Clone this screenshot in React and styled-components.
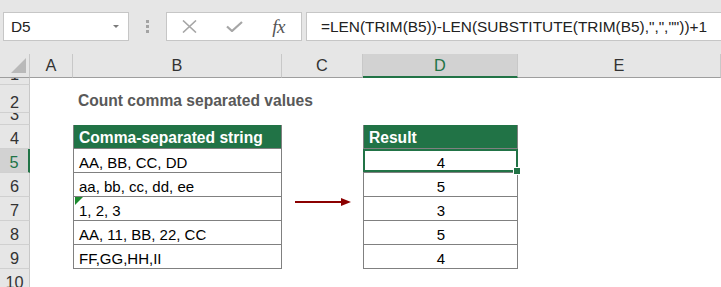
import React from 'react';
import styled, { createGlobalStyle } from 'styled-components';

// --- EXCEL-LIKE SHEET ---

const GlobalStyle = createGlobalStyle`
  html, body {
    margin: 0;
    padding: 0;
    background: #ffffff;
    overflow: hidden;
  }
`;

const GREEN = '#217346';
const CHROME = '#e6e6e6';

const Page = styled.div`
  width: 721px;
  height: 287px;
  overflow: hidden;
  font-family: 'Liberation Sans', Arial, sans-serif;
  color: #000;
`;

const TopBar = styled.div`
  height: 54px;
  box-sizing: border-box;
  background: ${CHROME};
  display: flex;
  align-items: flex-start;
  padding: 12px 0 0 3px;
`;

const NameBox = styled.div`
  width: 126px;
  height: 29px;
  box-sizing: border-box;
  background: #fff;
  border: 1px solid #c6c6c6;
  display: flex;
  align-items: center;
  justify-content: space-between;
  padding: 0 9px 0 7px;
  font-size: 15.4px;
  color: #222;
`;

const Caret = styled.span`
  width: 0;
  height: 0;
  border-left: 3.5px solid transparent;
  border-right: 3.5px solid transparent;
  border-top: 3.5px solid #7a7a7a;
`;

const Grip = styled.div`
  margin: 8px 0 0 17px;
  display: flex;
  flex-direction: column;
  gap: 2px;
`;

const GripDot = styled.span`
  width: 3px;
  height: 3px;
  background: #a3a3a3;
`;

const ButtonBox = styled.div`
  width: 136px;
  height: 29px;
  box-sizing: border-box;
  margin-left: 17px;
  background: #fff;
  border: 1px solid #c6c6c6;
  display: flex;
  align-items: center;
`;

const IconSlot = styled.div`
  width: 45px;
  display: flex;
  justify-content: center;
  align-items: center;
`;

const Fx = styled.span`
  font-family: 'Liberation Serif', 'Times New Roman', serif;
  font-style: italic;
  font-size: 19px;
  color: #555;
  letter-spacing: -0.5px;
`;

const FormulaBox = styled.div`
  flex: 1;
  height: 29px;
  box-sizing: border-box;
  margin-left: 4px;
  margin-right: -3px;
  background: #fff;
  border: 1px solid #c6c6c6;
  display: flex;
  align-items: center;
  padding-left: 14px;
  font-size: 15.4px;
  color: #222;
  white-space: nowrap;
`;

const Sheet = styled.div`
  display: grid;
  grid-template-columns: 30px 43px 209px 81px 155px 1fr;
  grid-template-rows: 24px 7px 28px 12px repeat(7, 24px);
  background: #fff;
`;

const Corner = styled.div`
  background: ${CHROME};
  border-right: 1px solid #c8c8c8;
  border-bottom: 1px solid #9e9e9e;
  display: flex;
  align-items: flex-end;
  justify-content: flex-end;
  padding: 0 3px 4px 0;
`;

const ColHead = styled.div`
  background: ${p => (p.$selected ? '#d2d2d2' : CHROME)};
  border-right: 1px solid #c8c8c8;
  border-bottom: ${p => (p.$selected ? `2px solid ${GREEN}` : '1px solid #9e9e9e')};
  display: flex;
  align-items: flex-end;
  justify-content: center;
  padding-bottom: ${p => (p.$selected ? 1 : 2)}px;
  font-size: 16.3px;
  color: ${p => (p.$selected ? GREEN : '#333')};
`;

const RowHead = styled.div`
  background: ${p => (p.$selected ? '#d2d2d2' : CHROME)};
  border-right: ${p => (p.$selected ? `2px solid ${GREEN}` : '1px solid #c8c8c8')};
  border-bottom: 1px solid #d0d0d0;
  display: flex;
  align-items: flex-end;
  justify-content: center;
  overflow: hidden;
  font-size: 16.3px;
  line-height: 20px;
  color: ${p => (p.$selected ? GREEN : '#333')};
`;

const Cell = styled.div`
  position: relative;
  display: flex;
  align-items: flex-end;
  justify-content: ${p => (p.$align === 'center' ? 'center' : 'flex-start')};
  padding: 0 4px ${p => (p.$title ? 3 : 1)}px 5px;
  font-size: ${p => (p.$head || p.$title ? '15.6px' : '15px')};
  font-weight: ${p => (p.$head || p.$title ? 700 : 400)};
  color: ${p => (p.$head ? '#fff' : p.$title ? '#595959' : '#000')};
  background: ${p => (p.$head ? GREEN : 'transparent')};
  white-space: nowrap;
  ${p =>
    p.$table &&
    `
    border-left: 1px solid #808080;
    border-right: 1px solid #808080;
    border-bottom: 1px solid #808080;
  `}
`;

const Selection = styled.div`
  position: absolute;
  top: 0;
  bottom: 0;
  left: -1px;
  right: -1px;
  border: 2px solid ${GREEN};
  z-index: 2;
  pointer-events: none;
`;

const FillHandle = styled.span`
  position: absolute;
  right: -4px;
  bottom: -4px;
  width: 6px;
  height: 6px;
  background: ${GREEN};
  box-shadow: 0 0 0 1px #fff;
`;

const ErrorMark = styled.span`
  position: absolute;
  top: 0;
  left: 1px;
  width: 0;
  height: 0;
  border-top: 8px solid #1b8a2e;
  border-right: 8px solid transparent;
`;

const ArrowCell = styled.div`
  display: flex;
  justify-content: center;
  align-items: flex-start;
  padding-top: 0;
`;

const rows = [
  { n: 1, h: 7 },
  { n: 2, title: 'Count comma separated values' },
  { n: 3 },
  { n: 4, head: true, b: 'Comma-separated string', d: 'Result' },
  { n: 5, b: 'AA, BB, CC, DD', d: 4, selected: true },
  { n: 6, b: 'aa, bb, cc, dd, ee', d: 5 },
  { n: 7, b: '1, 2, 3', d: 3, mark: true, arrow: true },
  { n: 8, b: 'AA, 11, BB, 22, CC', d: 5 },
  { n: 9, b: 'FF,GG,HH,II', d: 4 },
  { n: 10 },
];

const columns = ['A', 'B', 'C', 'D', 'E'];

function Arrow() {
  return (
    <svg width="56" height="10" viewBox="0 0 56 10">
      <line x1="0" y1="5" x2="48" y2="5" stroke="#8b0000" strokeWidth="2" />
      <polygon points="46,1 56,5 46,9" fill="#8b0000" />
    </svg>
  );
}

export default function App() {
  return (
    <Page>
      <GlobalStyle />
      <TopBar>
        <NameBox>
          <span>D5</span>
          <Caret />
        </NameBox>
        <Grip>
          <GripDot />
          <GripDot />
          <GripDot />
        </Grip>
        <ButtonBox>
          <IconSlot>
            <svg width="15" height="13" viewBox="0 0 15 13">
              <path d="M1 0.5 L14 12.5 M14 0.5 L1 12.5" stroke="#a6a6a6" strokeWidth="1.6" fill="none" />
            </svg>
          </IconSlot>
          <IconSlot>
            <svg width="17" height="11" viewBox="0 0 17 11">
              <path d="M1 5.5 L6 10 L16 1" stroke="#a6a6a6" strokeWidth="2.2" fill="none" />
            </svg>
          </IconSlot>
          <IconSlot>
            <Fx>fx</Fx>
          </IconSlot>
        </ButtonBox>
        <FormulaBox>=LEN(TRIM(B5))-LEN(SUBSTITUTE(TRIM(B5),",",""))+1</FormulaBox>
      </TopBar>

      <Sheet>
        <Corner>
          <svg width="15" height="15" viewBox="0 0 15 15">
            <polygon points="15,0 15,15 0,15" fill="#b9b9b9" />
          </svg>
        </Corner>
        {columns.map(c => (
          <ColHead key={c} $selected={c === 'D'}>{c}</ColHead>
        ))}

        {rows.map(r => {
          const inTable = r.b !== undefined;
          return (
            <React.Fragment key={r.n}>
              <RowHead $selected={r.selected}>{r.n}</RowHead>
              <Cell />
              {r.title ? (
                <Cell $title>{r.title}</Cell>
              ) : (
                <Cell $table={inTable} $head={r.head}>
                  {r.mark && <ErrorMark />}
                  {r.b}
                </Cell>
              )}
              {r.arrow ? (
                <ArrowCell>
                  <Arrow />
                </ArrowCell>
              ) : (
                <Cell />
              )}
              <Cell $table={inTable} $head={r.head} $align={r.head ? 'left' : 'center'}>
                {r.d}
                {r.selected && (
                  <Selection>
                    <FillHandle />
                  </Selection>
                )}
              </Cell>
              <Cell />
            </React.Fragment>
          );
        })}
      </Sheet>
    </Page>
  );
}
